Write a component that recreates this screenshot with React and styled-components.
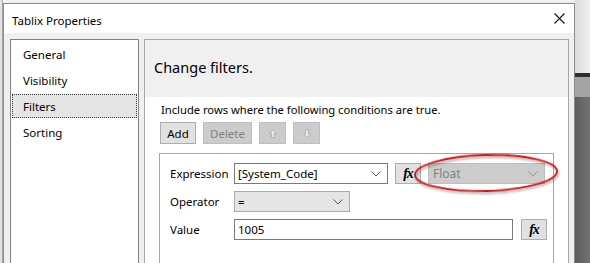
import React from 'react';
import styled, { createGlobalStyle } from 'styled-components';

const GlobalStyle = createGlobalStyle`
    html, body {
        margin: 0;
        padding: 0;
        background: #f0f0f0;
    }
    body {
        font-family: "Segoe UI", "Noto Sans", "Open Sans", sans-serif;
        font-size: 11px;
        color: #000;
    }
`

const Screen = styled.div`
    display: flex;
    width: 590px;
    height: 263px;
    overflow: hidden;
    background: #f7f7f7;
`

const LeftEdge = styled.div`
    width: 3px;
    flex: none;
    background: linear-gradient(to right, #e4e4e4 0, #e4e4e4 2px, #a8a8a8 2px, #a8a8a8 3px);
`

const DialogColumn = styled.div`
    display: flex;
    flex-direction: column;
    flex: none;
    width: 572px;
    padding-top: 3px;
`

const RightBackdrop = styled.div`
    flex: 1;
    display: flex;
    flex-direction: column;
`

const Band = styled.div`
    height: ${p => p.h ? p.h + 'px' : 'auto'};
    flex: ${p => p.h ? 'none' : '1'};
    background: ${p => p.bg};
`

const Dialog = styled.div`
    flex: 1;
    display: flex;
    flex-direction: column;
    border: 1px solid #8c8c8c;
    border-bottom: none;
    background: #f0f0f0;
    min-height: 0;
    box-shadow: 2px 0 6px rgba(0,0,0,0.12);
`

const TitleBar = styled.div`
    height: 29px;
    flex: none;
    display: flex;
    align-items: center;
    justify-content: space-between;
    background: #fff;
    padding: 0 9px 0 8px;
    font-size: 11.5px;
    box-sizing: border-box;
`

const TitleText = styled.span`
    padding-top: 3px;
`

const CloseWrap = styled.span`
    display: flex;
    padding-bottom: 1px;
`

const Body = styled.div`
    flex: 1;
    display: flex;
    gap: 5px;
    padding: 6px 5px 0 6px;
    min-height: 0;
`

const Nav = styled.ul`
    list-style: none;
    margin: 0;
    width: 125px;
    flex: none;
    background: #fff;
    border: 1px solid #828282;
    border-bottom: none;
    padding: 2px 1px 0;
`

const NavItem = styled.li`
    height: 24px;
    margin-bottom: 2px;
    padding-left: 10px;
    display: flex;
    align-items: center;
    box-sizing: border-box;
    font-size: 11.5px;
    background: ${p => p.active ? '#e5e5e5' : 'transparent'};
    border: 1px dotted ${p => p.active ? '#333' : 'transparent'};
`

const Panel = styled.div`
    flex: 1;
    display: flex;
    flex-direction: column;
    border: 1px solid #a6a6a6;
    border-bottom: none;
    min-width: 0;
`

const PanelHeader = styled.div`
    height: 57px;
    flex: none;
    display: flex;
    align-items: center;
    padding: 0 9px 4px;
    background: #f0f0f0;
    font-size: 14.5px;
    box-sizing: border-box;
`

const PanelContent = styled.div`
    flex: 1;
    background: #fff;
    padding: 4px 14px 0 15px;
    display: flex;
    flex-direction: column;
`

const Hint = styled.div`
    height: 17px;
    line-height: 17px;
    padding-left: 1px;
    font-size: 11.2px;
`

const Toolbar = styled.div`
    display: flex;
    gap: 7px;
    margin-top: 4px;
`

const Button = styled.button`
    height: 22px;
    width: ${p => p.w}px;
    padding: 0;
    font-family: inherit;
    font-size: 11.5px;
    display: flex;
    align-items: center;
    justify-content: center;
    box-sizing: border-box;
    border: 1px solid ${p => p.disabled ? '#bfbfbf' : '#adadad'};
    background: ${p => p.disabled ? '#cccccc' : '#e1e1e1'};
    color: ${p => p.disabled ? '#838383' : '#000'};
`

const FilterBox = styled.div`
    flex: 1;
    margin-top: 9px;
    margin-left: -1px;
    border: 1px solid #a6a6a6;
    border-bottom: none;
    padding: 9px 0 0 10px;
    display: grid;
    grid-template-columns: 64px auto;
    grid-auto-rows: 21px;
    row-gap: 7px;
    align-content: start;
    font-size: 11.5px;
`

const Label = styled.div`
    display: flex;
    align-items: center;
`

const Controls = styled.div`
    display: flex;
    align-items: center;
    gap: ${p => p.gap || 8}px;
`

const Combo = styled.div`
    width: ${p => p.w}px;
    height: 21px;
    box-sizing: border-box;
    display: flex;
    align-items: center;
    justify-content: space-between;
    padding: 0 6px 0 3px;
    border: 1px solid ${p => p.kind === 'edit' ? '#7a7a7a' : p.kind === 'disabled' ? '#bfbfbf' : '#acacac'};
    background: ${p => p.kind === 'edit' ? '#fff' : p.kind === 'disabled' ? '#cccccc' : '#e5e5e5'};
    color: ${p => p.kind === 'disabled' ? '#838383' : '#000'};
`

const FloatText = styled.span`
    padding-left: 1px;
    font-size: 12px;
`

const FxButton = styled.div`
    width: 26px;
    height: 21px;
    box-sizing: border-box;
    display: flex;
    align-items: center;
    justify-content: center;
    border: 1px solid #adadad;
    background: #e1e1e1;
    font-family: "Liberation Serif", "DejaVu Serif", serif;
    font-style: italic;
    font-weight: bold;
    font-size: 14px;
    letter-spacing: -1px;
`

const FloatWrap = styled.div`
    position: relative;
    display: flex;
`

const Ellipse = styled.svg`
    position: absolute;
    left: -15px;
    top: -10px;
    overflow: visible;
    pointer-events: none;
`

const Chevron = ({ color = '#555' }) => (
    <svg width="10" height="6" viewBox="0 0 10 6">
        <polyline points="0.5,0.5 5,5 9.5,0.5" fill="none" stroke={color} strokeWidth="1" />
    </svg>
)

const CloseIcon = () => (
    <svg width="11" height="11" viewBox="0 0 11 11">
        <path d="M0.5 0.5 L10.5 10.5 M10.5 0.5 L0.5 10.5" stroke="#111" strokeWidth="1.1" />
    </svg>
)

const Arrow = ({ down }) => (
    <svg width="8" height="9" viewBox="0 0 8 9" style={down ? { transform: 'rotate(180deg)' } : undefined}>
        <path d="M4 0.5 L7.5 4.5 L5.5 4.5 L5.5 8.5 L2.5 8.5 L2.5 4.5 L0.5 4.5 Z" fill="#e6e6e6" stroke="#a8a8a8" strokeWidth="0.8" />
    </svg>
)

const App = () => {
    const navItems = ['General', 'Visibility', 'Filters', 'Sorting'];

    return (
        <Screen>
            <GlobalStyle />
            <LeftEdge />
            <DialogColumn>
                <Dialog>
                    <TitleBar>
                        <TitleText>Tablix Properties</TitleText>
                        <CloseWrap><CloseIcon /></CloseWrap>
                    </TitleBar>
                    <Body>
                        <Nav>
                            {navItems.map(item => (
                                <NavItem key={item} active={item === 'Filters'}>{item}</NavItem>
                            ))}
                        </Nav>
                        <Panel>
                            <PanelHeader>Change filters.</PanelHeader>
                            <PanelContent>
                                <Hint>Include rows where the following conditions are true.</Hint>
                                <Toolbar>
                                    <Button w={36}>Add</Button>
                                    <Button w={49} disabled>Delete</Button>
                                    <Button w={27} disabled><Arrow /></Button>
                                    <Button w={27} disabled><Arrow down /></Button>
                                </Toolbar>
                                <FilterBox>
                                    <Label>Expression</Label>
                                    <Controls gap={7}>
                                        <Combo w={154} kind="edit">
                                            <span>[System_Code]</span>
                                            <Chevron />
                                        </Combo>
                                        <FxButton>fx</FxButton>
                                        <FloatWrap>
                                            <Combo w={117} kind="disabled">
                                                <FloatText>Float</FloatText>
                                                <Chevron color="#9a9a9a" />
                                            </Combo>
                                            <Ellipse width="146" height="40" viewBox="0 0 146 40">
                                                <defs>
                                                    <filter id="soft" x="-10%" y="-30%" width="120%" height="160%">
                                                        <feDropShadow dx="1" dy="2" stdDeviation="1.2" floodColor="#000" floodOpacity="0.35" />
                                                    </filter>
                                                </defs>
                                                <ellipse cx="73" cy="20" rx="71" ry="18" transform="rotate(-1.5 73 20)"
                                                    fill="none" stroke="#d01818" strokeWidth="1.8" filter="url(#soft)" />
                                            </Ellipse>
                                        </FloatWrap>
                                    </Controls>
                                    <Label>Operator</Label>
                                    <Controls>
                                        <Combo w={116}>
                                            <span>=</span>
                                            <Chevron />
                                        </Combo>
                                    </Controls>
                                    <Label>Value</Label>
                                    <Controls>
                                        <Combo w={279} kind="edit">1005</Combo>
                                        <FxButton>fx</FxButton>
                                    </Controls>
                                </FilterBox>
                            </PanelContent>
                        </Panel>
                    </Body>
                </Dialog>
            </DialogColumn>
            <RightBackdrop>
                <Band h={73} bg="linear-gradient(to right, #dcdcdc, #efefef)" />
                <Band h={4} bg="#2e2e2e" />
                <Band h={20} bg="#a3a3a3" />
                <Band bg="linear-gradient(to right, #5e5e5e, #727272)" />
            </RightBackdrop>
        </Screen>
    )
}

export default App
